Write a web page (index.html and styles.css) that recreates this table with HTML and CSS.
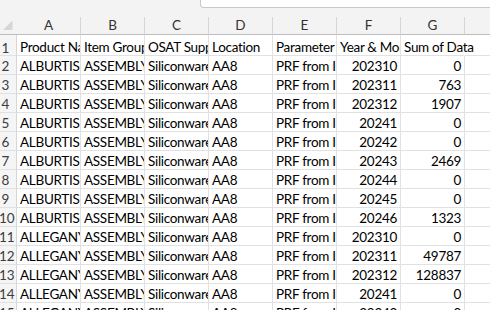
FILE: index.html
```html
<!DOCTYPE html>
<html>
<head>
<meta charset="utf-8">
<link rel="stylesheet" href="styles.css">
</head>
<body>
<div class="topbar"><div class="fbox"></div></div>
<div class="sheet">
  <div class="corner"><svg width="14" height="12" viewBox="0 0 14 12"><polygon points="12.5,1.5 12.5,11 3,11" fill="#d6d6d6"/></svg></div>
  <div class="ch">A</div><div class="ch">B</div><div class="ch">C</div><div class="ch">D</div><div class="ch">E</div><div class="ch">F</div><div class="ch">G</div><div class="ch last"></div>

  <div class="rh"><span>1</span></div><div class="c">Product Name</div><div class="c">Item Group</div><div class="c">OSAT Supplier</div><div class="c">Location</div><div class="c">Parameter</div><div class="c">Year &amp; Month</div><div class="c spill">Sum of Data</div><div class="c last"></div>

  <div class="rh"><span>2</span></div><div class="c">ALBURTIS</div><div class="c">ASSEMBLY</div><div class="c">Siliconware</div><div class="c">AA8</div><div class="c">PRF from Intel</div><div class="c n">202310</div><div class="c n">0</div><div class="c last"></div>
  <div class="rh"><span>3</span></div><div class="c">ALBURTIS</div><div class="c">ASSEMBLY</div><div class="c">Siliconware</div><div class="c">AA8</div><div class="c">PRF from Intel</div><div class="c n">202311</div><div class="c n">763</div><div class="c last"></div>
  <div class="rh"><span>4</span></div><div class="c">ALBURTIS</div><div class="c">ASSEMBLY</div><div class="c">Siliconware</div><div class="c">AA8</div><div class="c">PRF from Intel</div><div class="c n">202312</div><div class="c n">1907</div><div class="c last"></div>
  <div class="rh"><span>5</span></div><div class="c">ALBURTIS</div><div class="c">ASSEMBLY</div><div class="c">Siliconware</div><div class="c">AA8</div><div class="c">PRF from Intel</div><div class="c n">20241</div><div class="c n">0</div><div class="c last"></div>
  <div class="rh"><span>6</span></div><div class="c">ALBURTIS</div><div class="c">ASSEMBLY</div><div class="c">Siliconware</div><div class="c">AA8</div><div class="c">PRF from Intel</div><div class="c n">20242</div><div class="c n">0</div><div class="c last"></div>
  <div class="rh"><span>7</span></div><div class="c">ALBURTIS</div><div class="c">ASSEMBLY</div><div class="c">Siliconware</div><div class="c">AA8</div><div class="c">PRF from Intel</div><div class="c n">20243</div><div class="c n">2469</div><div class="c last"></div>
  <div class="rh"><span>8</span></div><div class="c">ALBURTIS</div><div class="c">ASSEMBLY</div><div class="c">Siliconware</div><div class="c">AA8</div><div class="c">PRF from Intel</div><div class="c n">20244</div><div class="c n">0</div><div class="c last"></div>
  <div class="rh"><span>9</span></div><div class="c">ALBURTIS</div><div class="c">ASSEMBLY</div><div class="c">Siliconware</div><div class="c">AA8</div><div class="c">PRF from Intel</div><div class="c n">20245</div><div class="c n">0</div><div class="c last"></div>
  <div class="rh"><span>10</span></div><div class="c">ALBURTIS</div><div class="c">ASSEMBLY</div><div class="c">Siliconware</div><div class="c">AA8</div><div class="c">PRF from Intel</div><div class="c n">20246</div><div class="c n">1323</div><div class="c last"></div>
  <div class="rh"><span>11</span></div><div class="c">ALLEGANY</div><div class="c">ASSEMBLY</div><div class="c">Siliconware</div><div class="c">AA8</div><div class="c">PRF from Intel</div><div class="c n">202310</div><div class="c n">0</div><div class="c last"></div>
  <div class="rh"><span>12</span></div><div class="c">ALLEGANY</div><div class="c">ASSEMBLY</div><div class="c">Siliconware</div><div class="c">AA8</div><div class="c">PRF from Intel</div><div class="c n">202311</div><div class="c n">49787</div><div class="c last"></div>
  <div class="rh"><span>13</span></div><div class="c">ALLEGANY</div><div class="c">ASSEMBLY</div><div class="c">Siliconware</div><div class="c">AA8</div><div class="c">PRF from Intel</div><div class="c n">202312</div><div class="c n">128837</div><div class="c last"></div>
  <div class="rh"><span>14</span></div><div class="c">ALLEGANY</div><div class="c">ASSEMBLY</div><div class="c">Siliconware</div><div class="c">AA8</div><div class="c">PRF from Intel</div><div class="c n">20241</div><div class="c n">0</div><div class="c last"></div>
  <div class="rh"><span>15</span></div><div class="c">ALLEGANY</div><div class="c">ASSEMBLY</div><div class="c">Siliconware</div><div class="c">AA8</div><div class="c">PRF from Intel</div><div class="c n">20242</div><div class="c n">0</div><div class="c last"></div>
</div>
</body>
</html>
```

FILE: styles.css
```css
html, body {
  margin: 0;
  padding: 0;
  width: 490px;
  height: 310px;
  overflow: hidden;
  background: #ffffff;
  font-family: "Lato", "Liberation Sans", sans-serif;
}

.topbar {
  height: 17px;
  background: #f3f3f3;
  display: flex;
  justify-content: flex-end;
  align-items: flex-start;
}

.fbox {
  width: 290px;
  height: 8px;
  box-sizing: border-box;
  background: #ffffff;
  border-left: 1px solid #c9c9c9;
  border-bottom: 1px solid #c9c9c9;
  border-bottom-left-radius: 4px;
}

.sheet {
  display: grid;
  grid-template-columns: 17px repeat(7, 64px) 1fr;
  grid-template-rows: 18px 21px;
  grid-auto-rows: 19px;
}

.corner {
  background: #f3f3f3;
  border-bottom: 1px solid #bdbdbd;
  display: flex;
  align-items: flex-start;
  padding-top: 2px;
}

.ch {
  background: #f3f3f3;
  border-right: 1px solid #d6d6d6;
  border-bottom: 1px solid #bdbdbd;
  color: #333333;
  font-size: 13.5px;
  line-height: 17px;
  text-align: center;
}

.ch.last {
  border-right: none;
}

.rh {
  background: #f5f5f5;
  border-right: 1px solid #d6d6d6;
  border-bottom: 1px solid #e1e1e1;
  color: #3c3c3c;
  font-size: 13.5px;
  line-height: 18px;
  overflow: hidden;
  white-space: nowrap;
}

.rh span {
  display: block;
  width: 13px;
  text-align: center;
  margin-left: -1px;
  padding-top: 1px;
}

.c {
  border-right: 1px solid #e1e1e1;
  border-bottom: 1px solid #e1e1e1;
  padding: 1px 0 0 3px;
  font-size: 13.5px;
  letter-spacing: -0.3px;
  line-height: 18px;
  color: #000000;
  white-space: nowrap;
  overflow: hidden;
}

.sheet > .rh:nth-child(10),
.sheet > .c:nth-child(n+11):nth-child(-n+18) {
  padding-top: 3px;
}

.c.n {
  text-align: right;
  padding: 1px 3px 0 0;
}

.c.spill {
  overflow: visible;
  border-right-color: transparent;
}

.c.last {
  border-right: none;
}
```
